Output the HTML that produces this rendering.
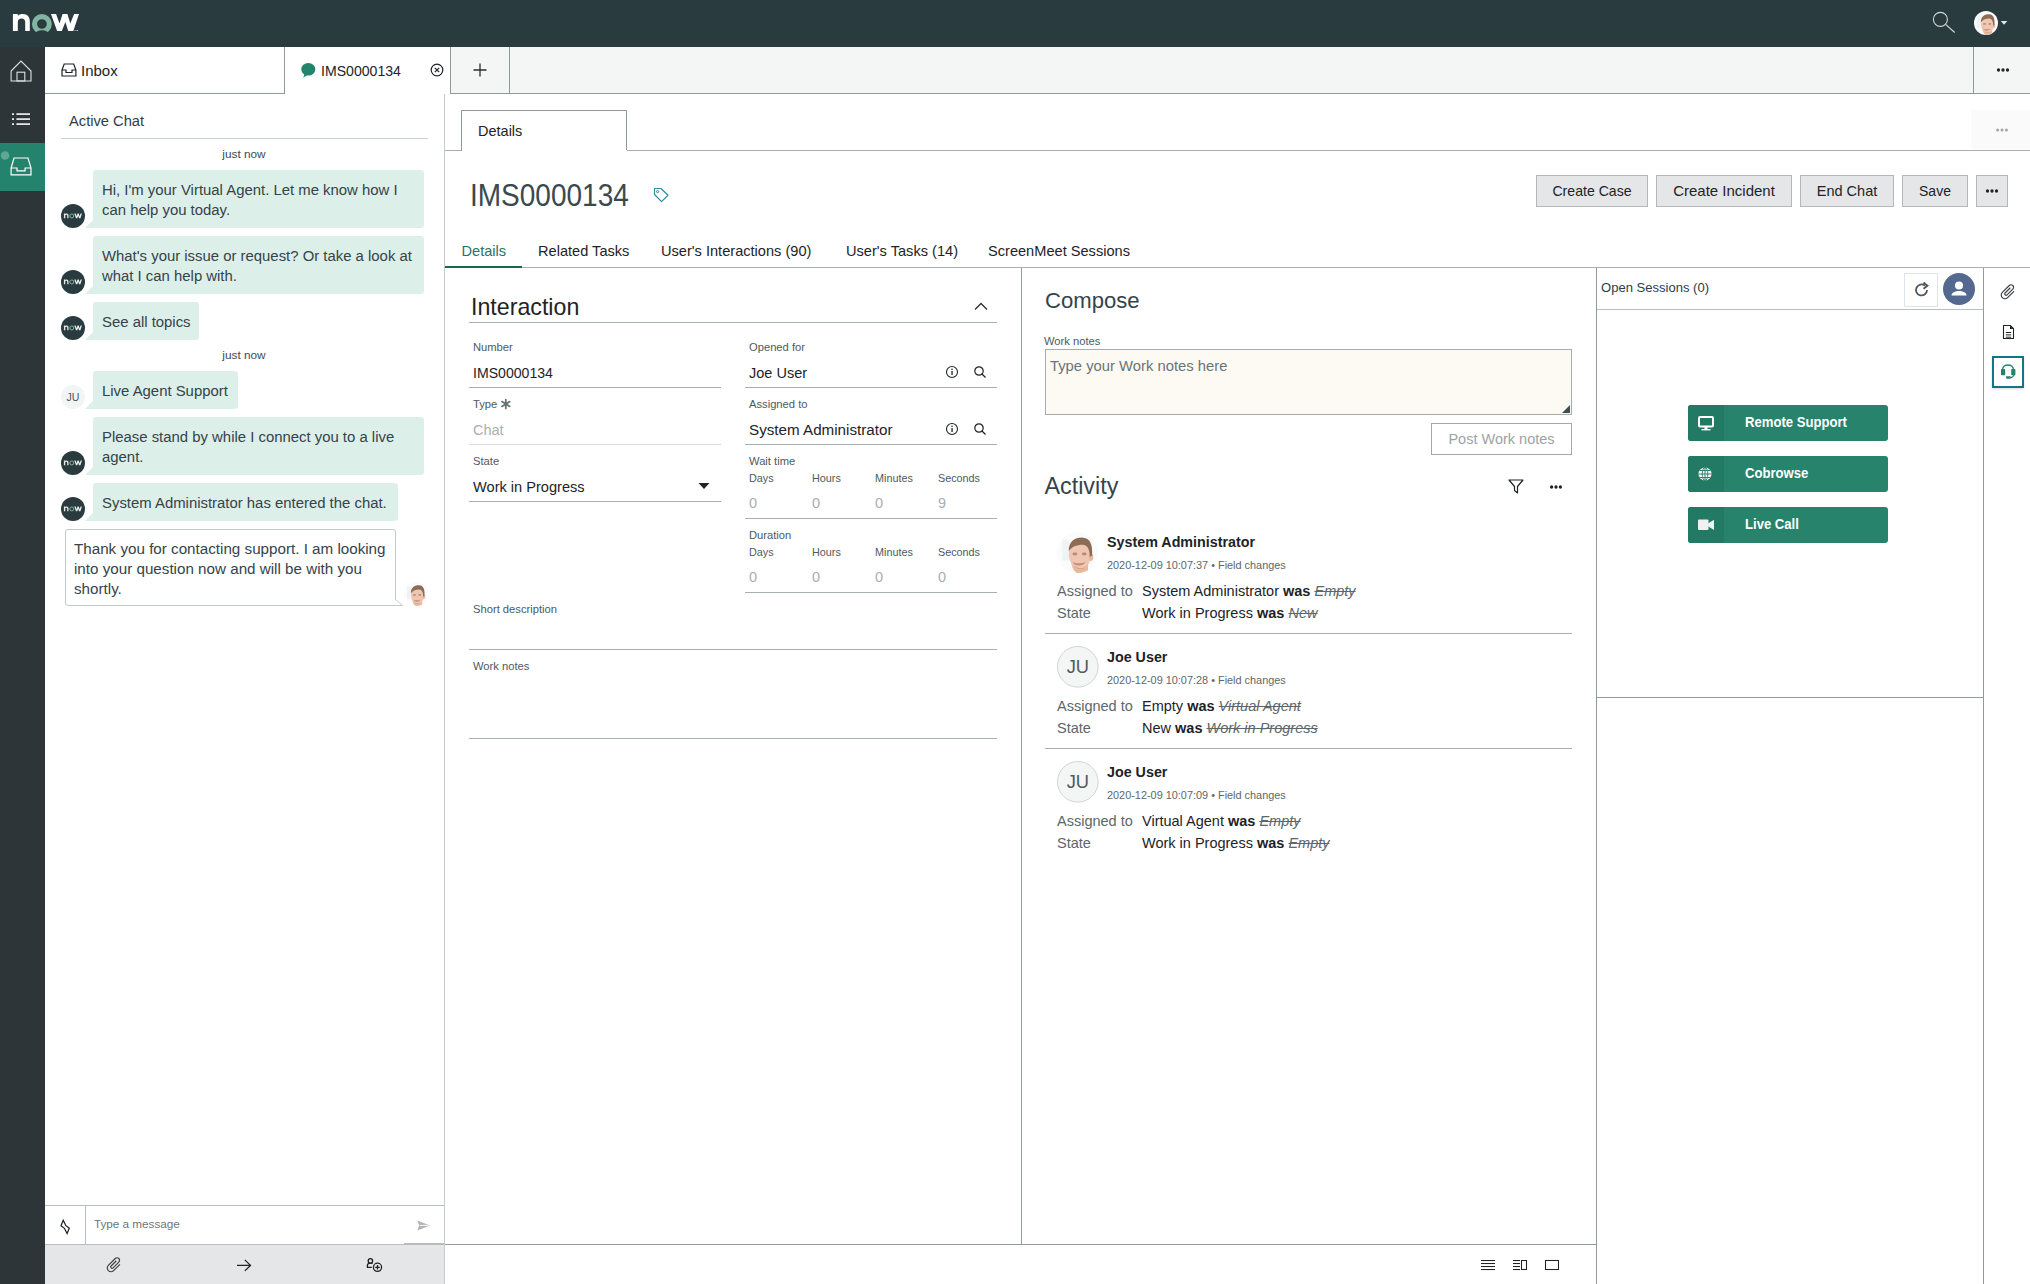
<!DOCTYPE html>
<html><head><meta charset="utf-8"><style>
html,body{margin:0;padding:0;}
body{width:2030px;height:1284px;position:relative;overflow:hidden;background:#fff;font-family:"Liberation Sans",sans-serif;}
.t{position:absolute;white-space:nowrap;}
.r{position:absolute;}
svg.r{overflow:visible}
b{font-weight:700}
</style></head><body>
<div class="r" style="left:0px;top:0px;width:2030px;height:47px;background:#2a3b40;"></div>
<svg class="r" style="left:0px;top:0px;" width="90" height="40" viewBox="0 0 90 40">
<path d="M12.9 31.1 V14 H17.8 V15.8 C19 14.6 20.8 14 22.8 14 C27.2 14 29.8 16.8 29.8 21.2 V31.1 H25.2 V22.2 C25.2 19.8 24 18.45 21.5 18.45 C19.1 18.45 17.8 20 17.8 22.5 V31.1 Z" fill="#fff"/>
<defs><clipPath id="lgc"><rect x="30" y="12" width="24" height="20"/></clipPath></defs>
<circle cx="41.9" cy="24" r="7.4" fill="none" stroke="#81b5a1" stroke-width="5.1" clip-path="url(#lgc)"/>
<ellipse cx="42" cy="34.6" rx="7" ry="4.4" fill="#2a3b40"/>
<path d="M51 14 H56.1 L59.5 23.4 L62.6 14 H67.4 L70.3 23.4 L74.1 14 H79 L73.3 31 H68.2 L65.4 21.9 L61.8 31 H57.1 Z" fill="#fff"/>
<rect x="74.5" y="30" width="1.2" height="1" fill="#9aa"/><rect x="76.5" y="30.2" width="1.5" height="0.8" fill="#dde"/>
</svg>
<svg class="r" style="left:1930px;top:9px;" width="30" height="30" viewBox="0 0 30 30"><circle cx="10.4" cy="10.4" r="7" fill="none" stroke="#d3d9d9" stroke-width="1.1"/><line x1="15.6" y1="15.3" x2="24.7" y2="23.5" stroke="#d3d9d9" stroke-width="1.1"/></svg>
<svg width="0" height="0" style="position:absolute"><defs><clipPath id="phc"><circle cx="20" cy="20" r="20"/></clipPath><symbol id="photo" viewBox="0 0 40 40"><g clip-path="url(#phc)"><rect width="40" height="40" fill="#fbfbfb"/><rect x="5" y="8" width="7" height="20" fill="#e9eef0" opacity="0.6"/><path d="M14 31 C16 38 18 41 24 41 L31 41 C30 37 30 33 30.5 30 Z" fill="#e8b89c"/><ellipse cx="22.5" cy="22.3" rx="10.8" ry="13.8" fill="#eec6b1"/><ellipse cx="33.2" cy="24.5" rx="2.2" ry="3.8" fill="#e8b89c"/><path d="M11.5 19 C11 9 18 5 25.5 5.5 C32 6 35 11.5 34.2 23 L32 24.5 C32 17 30 13 25 12.5 C19 12.5 14 14.5 11.5 19 Z" fill="#8c6c55"/><ellipse cx="17.5" cy="21.5" rx="2.4" ry="1.4" fill="#a47e6c" opacity="0.8"/><ellipse cx="26.5" cy="21.5" rx="2.4" ry="1.4" fill="#a47e6c" opacity="0.8"/><path d="M15 29 C18 34 25 34 28 29 C25 31 18 31 15 29Z" fill="#c98b78"/><path d="M17 33 C19 37 25 37 28 34 C26 36 20 36 17 33Z" fill="#b78368" opacity="0.6"/></g></symbol></defs></svg>
<svg class="r" style="left:1974px;top:11px" width="24" height="24" viewBox="0 0 40 40"><use href="#photo"/></svg>
<svg class="r" style="left:1998px;top:18px;" width="12" height="10" viewBox="0 0 12 10"><path d="M2.8 3 L9.3 3 L6 6.8Z" fill="#e3e7e8"/></svg>
<div class="r" style="left:0px;top:47px;width:45px;height:1237px;background:#2d3538;"></div>
<div class="r" style="left:0px;top:143px;width:45px;height:48px;background:#23836d;"></div>
<svg class="r" style="left:0px;top:150px;" width="12" height="12" viewBox="0 0 12 12"><circle cx="5" cy="5.5" r="4.3" fill="#5fa894"/></svg>
<svg class="r" style="left:0px;top:50px;" width="45" height="40" viewBox="0 0 45 40"><g transform="translate(0,-50)"><path d="M11.1 81 V71 L21 61.1 L31 71 V81 Z" fill="none" stroke="#dfe3e3" stroke-width="1.1" stroke-linejoin="miter"/><rect x="17" y="72.2" width="7.8" height="8.8" fill="none" stroke="#dfe3e3" stroke-width="1.1"/></g></svg>
<svg class="r" style="left:0px;top:100px;" width="45" height="40" viewBox="0 0 45 40"><g transform="translate(0,-100)" fill="#dfe3e3"><rect x="12" y="113.2" width="2" height="1.8"/><rect x="12" y="118.2" width="2" height="1.8"/><rect x="12" y="123.2" width="2" height="1.8"/><rect x="16.4" y="113.2" width="13.6" height="1.8"/><rect x="16.4" y="118.2" width="13.6" height="1.8"/><rect x="16.4" y="123.2" width="13.6" height="1.8"/></g></svg>
<svg class="r" style="left:0px;top:150px;" width="45" height="30" viewBox="0 0 45 30"><g transform="translate(0,-150)"><path d="M11.1 168 L14 158 H28 L31 168 V174.8 H11.1 Z M11.1 168 H17 V170.8 H25.1 V168 H31" fill="none" stroke="#fff" stroke-width="1.2" stroke-linejoin="miter"/></g></svg>
<div class="r" style="left:45px;top:47px;width:1985px;height:46px;background:#f4f6f5;"></div>
<div class="r" style="left:45px;top:93px;width:1985px;height:1px;background:#8f9b9b;"></div>
<div class="r" style="left:45px;top:47px;width:239px;height:46px;background:#fff;"></div>
<div class="r" style="left:284px;top:47px;width:1px;height:47px;background:#8f9b9b;"></div>
<div class="r" style="left:285px;top:47px;width:165px;height:47px;background:#fff;"></div>
<div class="r" style="left:450px;top:47px;width:1px;height:47px;background:#8f9b9b;"></div>
<div class="r" style="left:509px;top:47px;width:1px;height:47px;background:#8f9b9b;"></div>
<div class="r" style="left:1973px;top:47px;width:1px;height:47px;background:#8f9b9b;"></div>
<svg class="r" style="left:55px;top:55px;" width="30" height="30" viewBox="0 0 30 30"><g transform="translate(-55,-55)"><path d="M62 70 L64.2 64 H73.7 L75.9 70 V76 H62 Z M62 70 H66 V72.5 H72 V70 H75.9" fill="none" stroke="#1e2326" stroke-width="1.2"/></g></svg>
<div class="t " style="left:81px;top:63.30px;font-size:15px;line-height:15px;color:#1e2326;font-weight:400;">Inbox</div>
<svg class="r" style="left:299px;top:61px;" width="18" height="18" viewBox="0 0 18 18"><ellipse cx="9.3" cy="8.3" rx="7" ry="6.3" fill="#23836d"/><path d="M5.6 12.2 L4.4 16.5 L9.2 13.6Z" fill="#23836d"/></svg>
<div class="t " style="left:321px;top:64.06px;font-size:14.1px;line-height:14.1px;color:#1e2326;font-weight:400;">IMS0000134</div>
<svg class="r" style="left:429px;top:62px;" width="16" height="16" viewBox="0 0 16 16"><circle cx="8" cy="8" r="5.8" fill="none" stroke="#1e2326" stroke-width="1.2"/><path d="M5.8 5.8 L10.2 10.2 M10.2 5.8 L5.8 10.2" stroke="#1e2326" stroke-width="1.2"/></svg>
<svg class="r" style="left:472px;top:62px;" width="16" height="16" viewBox="0 0 16 16"><path d="M8 1.5 V14.5 M1.5 8 H14.5" stroke="#2b2f31" stroke-width="1.3"/></svg>
<svg class="r" style="left:1993px;top:65px" width="20" height="10"><g fill="#1e2326"><circle cx="5.5" cy="5" r="1.65"/><circle cx="10" cy="5" r="1.65"/><circle cx="14.5" cy="5" r="1.65"/></g></svg>
<div class="r" style="left:444px;top:94px;width:1px;height:1190px;background:#c6cbcb;"></div>
<div class="t " style="left:69px;top:113.56px;font-size:14.7px;line-height:14.7px;color:#2e3d49;font-weight:400;">Active Chat</div>
<div class="r" style="left:61px;top:138px;width:367px;height:1px;background:#cad0d0;"></div>
<div class="t" style="left:44.0px;width:400px;text-align:center;top:149.21px;font-size:11.8px;line-height:11.8px;color:#3e4a52;font-weight:400;">just now</div>
<div class="t" style="left:44.0px;width:400px;text-align:center;top:350.21px;font-size:11.8px;line-height:11.8px;color:#3e4a52;font-weight:400;">just now</div>
<div class="r" style="left:93px;top:170px;width:331px;height:58px;background:#ddefe9;border-radius:3px 3px 3px 0"></div>
<svg class="r" style="left:85px;top:219px;" width="9" height="9" viewBox="0 0 9 9"><path d="M0 9 L9 0 V9Z" fill="#ddefe9"/></svg>
<div class="t " style="left:102px;top:182.79px;font-size:14.9px;line-height:14.9px;color:#35434a;font-weight:400;">Hi, I'm your Virtual Agent. Let me know how I</div>
<div class="t " style="left:102px;top:202.79px;font-size:14.9px;line-height:14.9px;color:#35434a;font-weight:400;">can help you today.</div>
<svg class="r" style="left:61px;top:204px;" width="24" height="24" viewBox="0 0 24 24"><circle cx="12" cy="12" r="12" fill="#2a3b40"/><g transform="translate(2.9,9.6) scale(0.273) translate(-12.9,-14)"><path d="M12.9 31.1 V14 H17.8 V15.8 C19 14.6 20.8 14 22.8 14 C27.2 14 29.8 16.8 29.8 21.2 V31.1 H25.2 V22.2 C25.2 19.8 24 18.45 21.5 18.45 C19.1 18.45 17.8 20 17.8 22.5 V31.1 Z" fill="#e6ebea"/><circle cx="41.9" cy="22.6" r="7.3" fill="none" stroke="#81b5a1" stroke-width="3.6"/><path d="M51 14 H56.1 L59.5 23.4 L62.6 14 H67.4 L70.3 23.4 L74.1 14 H79 L73.3 31 H68.2 L65.4 21.9 L61.8 31 H57.1 Z" fill="#e6ebea"/></g></svg>
<div class="r" style="left:93px;top:236px;width:331px;height:58px;background:#ddefe9;border-radius:3px 3px 3px 0"></div>
<svg class="r" style="left:85px;top:285px;" width="9" height="9" viewBox="0 0 9 9"><path d="M0 9 L9 0 V9Z" fill="#ddefe9"/></svg>
<div class="t " style="left:102px;top:248.79px;font-size:14.9px;line-height:14.9px;color:#35434a;font-weight:400;">What's your issue or request? Or take a look at</div>
<div class="t " style="left:102px;top:268.79px;font-size:14.9px;line-height:14.9px;color:#35434a;font-weight:400;">what I can help with.</div>
<svg class="r" style="left:61px;top:270px;" width="24" height="24" viewBox="0 0 24 24"><circle cx="12" cy="12" r="12" fill="#2a3b40"/><g transform="translate(2.9,9.6) scale(0.273) translate(-12.9,-14)"><path d="M12.9 31.1 V14 H17.8 V15.8 C19 14.6 20.8 14 22.8 14 C27.2 14 29.8 16.8 29.8 21.2 V31.1 H25.2 V22.2 C25.2 19.8 24 18.45 21.5 18.45 C19.1 18.45 17.8 20 17.8 22.5 V31.1 Z" fill="#e6ebea"/><circle cx="41.9" cy="22.6" r="7.3" fill="none" stroke="#81b5a1" stroke-width="3.6"/><path d="M51 14 H56.1 L59.5 23.4 L62.6 14 H67.4 L70.3 23.4 L74.1 14 H79 L73.3 31 H68.2 L65.4 21.9 L61.8 31 H57.1 Z" fill="#e6ebea"/></g></svg>
<div class="r" style="left:93px;top:302px;width:106px;height:38px;background:#ddefe9;border-radius:3px 3px 3px 0"></div>
<svg class="r" style="left:85px;top:331px;" width="9" height="9" viewBox="0 0 9 9"><path d="M0 9 L9 0 V9Z" fill="#ddefe9"/></svg>
<div class="t " style="left:102px;top:314.79px;font-size:14.9px;line-height:14.9px;color:#35434a;font-weight:400;">See all topics</div>
<svg class="r" style="left:61px;top:316px;" width="24" height="24" viewBox="0 0 24 24"><circle cx="12" cy="12" r="12" fill="#2a3b40"/><g transform="translate(2.9,9.6) scale(0.273) translate(-12.9,-14)"><path d="M12.9 31.1 V14 H17.8 V15.8 C19 14.6 20.8 14 22.8 14 C27.2 14 29.8 16.8 29.8 21.2 V31.1 H25.2 V22.2 C25.2 19.8 24 18.45 21.5 18.45 C19.1 18.45 17.8 20 17.8 22.5 V31.1 Z" fill="#e6ebea"/><circle cx="41.9" cy="22.6" r="7.3" fill="none" stroke="#81b5a1" stroke-width="3.6"/><path d="M51 14 H56.1 L59.5 23.4 L62.6 14 H67.4 L70.3 23.4 L74.1 14 H79 L73.3 31 H68.2 L65.4 21.9 L61.8 31 H57.1 Z" fill="#e6ebea"/></g></svg>
<div class="r" style="left:93px;top:371px;width:145px;height:38px;background:#ddefe9;border-radius:3px 3px 3px 0"></div>
<svg class="r" style="left:85px;top:400px;" width="9" height="9" viewBox="0 0 9 9"><path d="M0 9 L9 0 V9Z" fill="#ddefe9"/></svg>
<div class="t " style="left:102px;top:383.79px;font-size:14.9px;line-height:14.9px;color:#35434a;font-weight:400;">Live Agent Support</div>
<svg class="r" style="left:61px;top:385px;" width="24" height="24" viewBox="0 0 24 24"><circle cx="12" cy="12" r="12" fill="#f3f5f5"/><text x="12" y="16.3" text-anchor="middle" font-family="Liberation Sans" font-size="10.5" fill="#4a5458">JU</text></svg>
<div class="r" style="left:93px;top:417px;width:331px;height:58px;background:#ddefe9;border-radius:3px 3px 3px 0"></div>
<svg class="r" style="left:85px;top:466px;" width="9" height="9" viewBox="0 0 9 9"><path d="M0 9 L9 0 V9Z" fill="#ddefe9"/></svg>
<div class="t " style="left:102px;top:429.79px;font-size:14.9px;line-height:14.9px;color:#35434a;font-weight:400;">Please stand by while I connect you to a live</div>
<div class="t " style="left:102px;top:449.79px;font-size:14.9px;line-height:14.9px;color:#35434a;font-weight:400;">agent.</div>
<svg class="r" style="left:61px;top:451px;" width="24" height="24" viewBox="0 0 24 24"><circle cx="12" cy="12" r="12" fill="#2a3b40"/><g transform="translate(2.9,9.6) scale(0.273) translate(-12.9,-14)"><path d="M12.9 31.1 V14 H17.8 V15.8 C19 14.6 20.8 14 22.8 14 C27.2 14 29.8 16.8 29.8 21.2 V31.1 H25.2 V22.2 C25.2 19.8 24 18.45 21.5 18.45 C19.1 18.45 17.8 20 17.8 22.5 V31.1 Z" fill="#e6ebea"/><circle cx="41.9" cy="22.6" r="7.3" fill="none" stroke="#81b5a1" stroke-width="3.6"/><path d="M51 14 H56.1 L59.5 23.4 L62.6 14 H67.4 L70.3 23.4 L74.1 14 H79 L73.3 31 H68.2 L65.4 21.9 L61.8 31 H57.1 Z" fill="#e6ebea"/></g></svg>
<div class="r" style="left:93px;top:483px;width:305px;height:38px;background:#ddefe9;border-radius:3px 3px 3px 0"></div>
<svg class="r" style="left:85px;top:512px;" width="9" height="9" viewBox="0 0 9 9"><path d="M0 9 L9 0 V9Z" fill="#ddefe9"/></svg>
<div class="t " style="left:102px;top:495.79px;font-size:14.9px;line-height:14.9px;color:#35434a;font-weight:400;">System Administrator has entered the chat.</div>
<svg class="r" style="left:61px;top:497px;" width="24" height="24" viewBox="0 0 24 24"><circle cx="12" cy="12" r="12" fill="#2a3b40"/><g transform="translate(2.9,9.6) scale(0.273) translate(-12.9,-14)"><path d="M12.9 31.1 V14 H17.8 V15.8 C19 14.6 20.8 14 22.8 14 C27.2 14 29.8 16.8 29.8 21.2 V31.1 H25.2 V22.2 C25.2 19.8 24 18.45 21.5 18.45 C19.1 18.45 17.8 20 17.8 22.5 V31.1 Z" fill="#e6ebea"/><circle cx="41.9" cy="22.6" r="7.3" fill="none" stroke="#81b5a1" stroke-width="3.6"/><path d="M51 14 H56.1 L59.5 23.4 L62.6 14 H67.4 L70.3 23.4 L74.1 14 H79 L73.3 31 H68.2 L65.4 21.9 L61.8 31 H57.1 Z" fill="#e6ebea"/></g></svg>
<div class="r" style="left:65px;top:529px;width:329px;height:75px;background:#fff;border:1px solid #c3c8c8;border-radius:3px 3px 0 3px"></div>
<svg class="r" style="left:394px;top:595px;" width="12" height="12" viewBox="0 0 12 12"><path d="M0 0 H1.5 V4.4 L8.5 10.5 H0 Z" fill="#fff"/><path d="M1.5 0 V4.4 L8.5 10.5 H0" fill="none" stroke="#c3c8c8" stroke-width="1"/></svg>
<div class="t " style="left:74px;top:540.63px;font-size:15.2px;line-height:15.2px;color:#35434a;font-weight:400;">Thank you for contacting support. I am looking</div>
<div class="t " style="left:74px;top:560.63px;font-size:15.2px;line-height:15.2px;color:#35434a;font-weight:400;">into your question now and will be with you</div>
<div class="t " style="left:74px;top:580.63px;font-size:15.2px;line-height:15.2px;color:#35434a;font-weight:400;">shortly.</div>
<svg class="r" style="left:404px;top:582px" width="24" height="24" viewBox="0 0 40 40"><use href="#photo"/></svg>
<div class="r" style="left:45px;top:1205px;width:399px;height:1px;background:#b5bdbd;"></div>
<div class="r" style="left:85px;top:1205px;width:1px;height:39px;background:#b5bdbd;"></div>
<svg class="r" style="left:45px;top:1205px;" width="40" height="39" viewBox="0 0 40 39"><g transform="translate(-45,-1205)"><path d="M63.2 1220.2 L65.9 1225.7 L69.3 1228.2 L67.1 1233.6 L64.4 1228.3 L61 1225.8 Z" fill="none" stroke="#1e2326" stroke-width="1.25" stroke-linejoin="miter"/></g></svg>
<div class="t " style="left:94px;top:1218.10px;font-size:11.7px;line-height:11.7px;color:#6e7679;font-weight:400;">Type a message</div>
<svg class="r" style="left:410px;top:1215px;" width="25" height="20" viewBox="0 0 25 20"><g transform="translate(-410,-1215)"><path d="M417.4 1220.4 L429.9 1225.4 L417.4 1230.6 L419.1 1225.4 Z" fill="#b3b5b5"/><path d="M419.6 1225.4 H428.5" stroke="#fff" stroke-width="0.9"/></g></svg>
<div class="r" style="left:45px;top:1244px;width:399px;height:40px;background:#e5e6e8;"></div>
<div class="r" style="left:45px;top:1244px;width:399px;height:1px;background:#b5bdbd;"></div>
<div class="r" style="left:404px;top:1243px;width:40px;height:2px;background:#b9baba;"></div>
<svg class="r" style="left:104px;top:1255px;" width="20" height="20" viewBox="0 0 20 20"><g transform="rotate(45 10 10) translate(0.25,0.64) scale(0.78)"><path d="M16.5 6v11.5c0 2.21-1.79 4-4 4s-4-1.79-4-4V5c0-1.38 1.12-2.5 2.5-2.5s2.5 1.12 2.5 2.5v10.5c0 .55-.45 1-1 1s-1-.45-1-1V6H10v9.5c0 1.38 1.12 2.5 2.5 2.5s2.5-1.12 2.5-2.5V5c0-2.21-1.79-4-4-4S7 2.79 7 5v12.5c0 3.04 2.46 5.5 5.5 5.5s5.5-2.46 5.5-5.5V6h-1.5z" fill="#3a4043"/></g></svg>
<svg class="r" style="left:220px;top:1245px;" width="180" height="39" viewBox="0 0 180 39"><g transform="translate(-220,-1245)" fill="none" stroke="#1e2326" stroke-width="1.3"><path d="M237 1265.4 H251 M244.8 1259.9 L250.5 1265.4 L244.8 1270.9"/><circle cx="370.4" cy="1260.9" r="2.2"/><path d="M372.5 1263.4 C370.5 1263 367.4 1263.2 367.4 1265 V1267.4 H371.8"/><circle cx="377.5" cy="1267.3" r="4.1"/><path d="M377.5 1265 V1269.6 M375.2 1267.3 H379.8"/></g></svg>
<div class="r" style="left:445px;top:150px;width:1585px;height:1px;background:#a9b0b3;"></div>
<div class="r" style="left:461px;top:110px;width:166px;height:41px;background:#fff;border:1px solid #8f9b9b;border-bottom:none;box-sizing:border-box"></div>
<div class="r" style="left:462px;top:150px;width:165px;height:1px;background:#fff;"></div>
<div class="t " style="left:478px;top:123.73px;font-size:14.5px;line-height:14.5px;color:#1e2326;font-weight:400;">Details</div>
<div class="r" style="left:1971px;top:110px;width:59px;height:39px;background:#fafafa;"></div>
<svg class="r" style="left:1992px;top:125px" width="20" height="10"><g fill="#a0a6a8"><circle cx="5.6" cy="5" r="1.5"/><circle cx="10" cy="5" r="1.5"/><circle cx="14.4" cy="5" r="1.5"/></g></svg>
<div class="t " style="left:470.3px;top:180.42px;font-size:31.4px;line-height:31.4px;color:#3b494f;font-weight:400;transform:scaleX(0.892);transform-origin:0 0;">IMS0000134</div>
<svg class="r" style="left:645px;top:180px;" width="30" height="30" viewBox="0 0 30 30"><path d="M9.5 8.5 H16 L23 15.3 L16.5 21.6 L9.5 14.5 Z" fill="none" stroke="#2e8a9c" stroke-width="1.2" stroke-linejoin="round"/><circle cx="12.6" cy="11.6" r="1.1" fill="none" stroke="#2e8a9c" stroke-width="1"/></svg>
<div class="r" style="left:1536px;top:175px;width:112px;height:32px;background:#e4e6e7;border:1px solid #b3b9ba;box-sizing:border-box"></div>
<div class="t" style="left:1536.0px;width:112px;text-align:center;top:184.06px;font-size:14.1px;line-height:14.1px;color:#1e2326;font-weight:400;">Create Case</div>
<div class="r" style="left:1656px;top:175px;width:136px;height:32px;background:#e4e6e7;border:1px solid #b3b9ba;box-sizing:border-box"></div>
<div class="t" style="left:1656.0px;width:136px;text-align:center;top:183.30px;font-size:15px;line-height:15px;color:#1e2326;font-weight:400;">Create Incident</div>
<div class="r" style="left:1800px;top:175px;width:94px;height:32px;background:#e4e6e7;border:1px solid #b3b9ba;box-sizing:border-box"></div>
<div class="t" style="left:1800.0px;width:94px;text-align:center;top:183.73px;font-size:14.5px;line-height:14.5px;color:#1e2326;font-weight:400;">End Chat</div>
<div class="r" style="left:1902px;top:175px;width:66px;height:32px;background:#e4e6e7;border:1px solid #b3b9ba;box-sizing:border-box"></div>
<div class="t" style="left:1902.0px;width:66px;text-align:center;top:184.15px;font-size:14px;line-height:14px;color:#1e2326;font-weight:400;">Save</div>
<div class="r" style="left:1976px;top:175px;width:32px;height:32px;background:#e4e6e7;border:1px solid #b3b9ba;box-sizing:border-box"></div>
<svg class="r" style="left:1982px;top:186px" width="20" height="10"><g fill="#1e2326"><circle cx="5.5" cy="5" r="1.65"/><circle cx="10" cy="5" r="1.65"/><circle cx="14.5" cy="5" r="1.65"/></g></svg>
<div class="r" style="left:445px;top:267px;width:1585px;height:1px;background:#a9b0b3;"></div>
<div class="t " style="left:461.5px;top:243.64px;font-size:14.6px;line-height:14.6px;color:#2a7262;font-weight:400;">Details</div>
<div class="r" style="left:445px;top:266px;width:77px;height:2px;background:#1f6452;"></div>
<div class="t " style="left:538px;top:243.64px;font-size:14.6px;line-height:14.6px;color:#1e2326;font-weight:400;">Related Tasks</div>
<div class="t " style="left:661px;top:243.64px;font-size:14.6px;line-height:14.6px;color:#1e2326;font-weight:400;">User's Interactions (90)</div>
<div class="t " style="left:846px;top:243.64px;font-size:14.6px;line-height:14.6px;color:#1e2326;font-weight:400;">User's Tasks (14)</div>
<div class="t " style="left:988px;top:243.64px;font-size:14.6px;line-height:14.6px;color:#1e2326;font-weight:400;">ScreenMeet Sessions</div>
<div class="r" style="left:1021px;top:268px;width:1px;height:976px;background:#939c9e;"></div>
<div class="t " style="left:471px;top:296.16px;font-size:23.2px;line-height:23.2px;color:#1e2326;font-weight:400;">Interaction</div>
<svg class="r" style="left:972px;top:299px;" width="18" height="14" viewBox="0 0 18 14"><path d="M3 10.5 L9 4.5 L15 10.5" fill="none" stroke="#2b2f31" stroke-width="1.3"/></svg>
<div class="r" style="left:469px;top:322px;width:528px;height:1px;background:#a9b0b3;"></div>
<div class="t " style="left:473px;top:341.52px;font-size:11.2px;line-height:11.2px;color:#4d5a60;font-weight:400;">Number</div>
<div class="t " style="left:473px;top:366.06px;font-size:14.1px;line-height:14.1px;color:#1e2326;font-weight:400;">IMS0000134</div>
<div class="r" style="left:469px;top:387px;width:252px;height:1px;background:#a9b0b3;"></div>
<div class="t " style="left:473px;top:398.52px;font-size:11.2px;line-height:11.2px;color:#4d5a60;font-weight:400;">Type</div>
<svg class="r" style="left:499px;top:398px;" width="14" height="12" viewBox="0 0 14 12"><g stroke="#687375" stroke-width="1.8" stroke-linecap="round"><path d="M6.8 1.6 V10.4 M2.9 3.6 L10.7 8.4 M10.7 3.6 L2.9 8.4"/></g></svg>
<div class="t " style="left:473px;top:422.73px;font-size:14.5px;line-height:14.5px;color:#a9aeb0;font-weight:400;">Chat</div>
<div class="r" style="left:469px;top:444px;width:252px;height:1px;background:#d7dbdb;"></div>
<div class="t " style="left:473px;top:455.52px;font-size:11.2px;line-height:11.2px;color:#4d5a60;font-weight:400;">State</div>
<div class="t " style="left:473px;top:479.64px;font-size:14.6px;line-height:14.6px;color:#1e2326;font-weight:400;">Work in Progress</div>
<svg class="r" style="left:697px;top:481px;" width="14" height="10" viewBox="0 0 14 10"><path d="M1.5 2 H12.5 L7 8Z" fill="#1e2326"/></svg>
<div class="r" style="left:469px;top:501px;width:252px;height:1px;background:#a9b0b3;"></div>
<div class="t " style="left:749px;top:341.52px;font-size:11.2px;line-height:11.2px;color:#4d5a60;font-weight:400;">Opened for</div>
<div class="t " style="left:749px;top:365.73px;font-size:14.5px;line-height:14.5px;color:#1e2326;font-weight:400;">Joe User</div>
<div class="r" style="left:745px;top:387px;width:252px;height:1px;background:#a9b0b3;"></div>
<div class="t " style="left:749px;top:398.52px;font-size:11.2px;line-height:11.2px;color:#4d5a60;font-weight:400;">Assigned to</div>
<div class="t " style="left:749px;top:422.13px;font-size:15.2px;line-height:15.2px;color:#1e2326;font-weight:400;">System Administrator</div>
<div class="r" style="left:745px;top:444px;width:252px;height:1px;background:#a9b0b3;"></div>
<svg class="r" style="left:945px;top:365px;" width="14" height="14" viewBox="0 0 14 14"><circle cx="7" cy="7" r="5.5" fill="none" stroke="#1e2326" stroke-width="1.1"/><rect x="6.4" y="6" width="1.3" height="4" fill="#1e2326"/><circle cx="7" cy="4.2" r="0.8" fill="#1e2326"/></svg>
<svg class="r" style="left:973px;top:365px;" width="14" height="14" viewBox="0 0 14 14"><circle cx="6" cy="6" r="4.2" fill="none" stroke="#1e2326" stroke-width="1.2"/><line x1="9" y1="9" x2="12.5" y2="12.5" stroke="#1e2326" stroke-width="1.3"/></svg>
<svg class="r" style="left:945px;top:422px;" width="14" height="14" viewBox="0 0 14 14"><circle cx="7" cy="7" r="5.5" fill="none" stroke="#1e2326" stroke-width="1.1"/><rect x="6.4" y="6" width="1.3" height="4" fill="#1e2326"/><circle cx="7" cy="4.2" r="0.8" fill="#1e2326"/></svg>
<svg class="r" style="left:973px;top:422px;" width="14" height="14" viewBox="0 0 14 14"><circle cx="6" cy="6" r="4.2" fill="none" stroke="#1e2326" stroke-width="1.2"/><line x1="9" y1="9" x2="12.5" y2="12.5" stroke="#1e2326" stroke-width="1.3"/></svg>
<div class="t " style="left:749px;top:455.52px;font-size:11.2px;line-height:11.2px;color:#4d5a60;font-weight:400;">Wait time</div>
<div class="t " style="left:749px;top:472.86px;font-size:10.8px;line-height:10.8px;color:#4d5a60;font-weight:400;">Days</div>
<div class="t " style="left:749px;top:496.13px;font-size:14.5px;line-height:14.5px;color:#a9aeb0;font-weight:400;">0</div>
<div class="t " style="left:812px;top:472.86px;font-size:10.8px;line-height:10.8px;color:#4d5a60;font-weight:400;">Hours</div>
<div class="t " style="left:812px;top:496.13px;font-size:14.5px;line-height:14.5px;color:#a9aeb0;font-weight:400;">0</div>
<div class="t " style="left:875px;top:472.86px;font-size:10.8px;line-height:10.8px;color:#4d5a60;font-weight:400;">Minutes</div>
<div class="t " style="left:875px;top:496.13px;font-size:14.5px;line-height:14.5px;color:#a9aeb0;font-weight:400;">0</div>
<div class="t " style="left:938px;top:472.86px;font-size:10.8px;line-height:10.8px;color:#4d5a60;font-weight:400;">Seconds</div>
<div class="t " style="left:938px;top:496.13px;font-size:14.5px;line-height:14.5px;color:#a9aeb0;font-weight:400;">9</div>
<div class="r" style="left:745px;top:518px;width:252px;height:1px;background:#a9b0b3;"></div>
<div class="t " style="left:749px;top:546.86px;font-size:10.8px;line-height:10.8px;color:#4d5a60;font-weight:400;">Days</div>
<div class="t " style="left:749px;top:569.73px;font-size:14.5px;line-height:14.5px;color:#a9aeb0;font-weight:400;">0</div>
<div class="t " style="left:812px;top:546.86px;font-size:10.8px;line-height:10.8px;color:#4d5a60;font-weight:400;">Hours</div>
<div class="t " style="left:812px;top:569.73px;font-size:14.5px;line-height:14.5px;color:#a9aeb0;font-weight:400;">0</div>
<div class="t " style="left:875px;top:546.86px;font-size:10.8px;line-height:10.8px;color:#4d5a60;font-weight:400;">Minutes</div>
<div class="t " style="left:875px;top:569.73px;font-size:14.5px;line-height:14.5px;color:#a9aeb0;font-weight:400;">0</div>
<div class="t " style="left:938px;top:546.86px;font-size:10.8px;line-height:10.8px;color:#4d5a60;font-weight:400;">Seconds</div>
<div class="t " style="left:938px;top:569.73px;font-size:14.5px;line-height:14.5px;color:#a9aeb0;font-weight:400;">0</div>
<div class="r" style="left:745px;top:592px;width:252px;height:1px;background:#a9b0b3;"></div>
<div class="t " style="left:749px;top:529.82px;font-size:11.2px;line-height:11.2px;color:#4d5a60;font-weight:400;">Duration</div>
<div class="t " style="left:473px;top:603.52px;font-size:11.2px;line-height:11.2px;color:#4d5a60;font-weight:400;">Short description</div>
<div class="r" style="left:469px;top:649px;width:528px;height:1px;background:#a9b0b3;"></div>
<div class="t " style="left:473px;top:660.52px;font-size:11.2px;line-height:11.2px;color:#4d5a60;font-weight:400;">Work notes</div>
<div class="r" style="left:469px;top:738px;width:528px;height:1px;background:#a9b0b3;"></div>
<div class="t " style="left:1045px;top:290.29px;font-size:22.1px;line-height:22.1px;color:#34444c;font-weight:400;">Compose</div>
<div class="t " style="left:1044px;top:335.52px;font-size:11.2px;line-height:11.2px;color:#4d5a60;font-weight:400;">Work notes</div>
<div class="r" style="left:1045px;top:349px;width:527px;height:66px;background:#fdfaf3;border:1px solid #a5adad;box-sizing:border-box"></div>
<svg class="r" style="left:1561px;top:404px;" width="10" height="10" viewBox="0 0 10 10"><path d="M9 1 V9 H1Z" fill="#3d4d52"/></svg>
<div class="t " style="left:1050px;top:359.47px;font-size:14.8px;line-height:14.8px;color:#6a7376;font-weight:400;">Type your Work notes here</div>
<div class="r" style="left:1431px;top:423px;width:141px;height:32px;background:#fff;border:1px solid #a3a8a8;box-sizing:border-box"></div>
<div class="t" style="left:1431.0px;width:141px;text-align:center;top:431.73px;font-size:14.5px;line-height:14.5px;color:#9da3a5;font-weight:400;">Post Work notes</div>
<div class="t " style="left:1044.5px;top:475.28px;font-size:23.3px;line-height:23.3px;color:#34444c;font-weight:400;">Activity</div>
<svg class="r" style="left:1507px;top:477px;" width="18" height="18" viewBox="0 0 18 18"><path d="M2 3 H16 L10.5 9.5 V16 L7.5 13.5 V9.5 Z" fill="none" stroke="#1e2326" stroke-width="1.2" stroke-linejoin="round"/></svg>
<svg class="r" style="left:1546px;top:482px" width="20" height="10"><g fill="#1e2326"><circle cx="5.6" cy="5" r="1.65"/><circle cx="10" cy="5" r="1.65"/><circle cx="14.4" cy="5" r="1.65"/></g></svg>
<svg class="r" style="left:1057px;top:532px" width="41" height="41" viewBox="0 0 40 40"><use href="#photo"/></svg>
<div class="t " style="left:1107px;top:534.90px;font-size:14.3px;line-height:14.3px;color:#1e2326;font-weight:700;">System Administrator</div>
<div class="t " style="left:1107px;top:559.57px;font-size:10.9px;line-height:10.9px;color:#5c676c;font-weight:400;">2020-12-09 10:07:37 &bull; Field changes</div>
<div class="t " style="left:1057px;top:584.23px;font-size:14.5px;line-height:14.5px;color:#5c676c;font-weight:400;">Assigned to</div>
<div class="t " style="left:1142px;top:584.23px;font-size:14.5px;line-height:14.5px;color:#1e2326;font-weight:400;">System Administrator <b>was</b> <i style="text-decoration:line-through;color:#5c676c">Empty</i></div>
<div class="t " style="left:1057px;top:606.03px;font-size:14.5px;line-height:14.5px;color:#5c676c;font-weight:400;">State</div>
<div class="t " style="left:1142px;top:606.03px;font-size:14.5px;line-height:14.5px;color:#1e2326;font-weight:400;">Work in Progress <b>was</b> <i style="text-decoration:line-through;color:#5c676c">New</i></div>
<div class="r" style="left:1045px;top:633px;width:527px;height:1px;background:#a9b0b3;"></div>
<svg class="r" style="left:1057px;top:646px;" width="42" height="42" viewBox="0 0 42 42"><circle cx="20.8" cy="20.8" r="20.3" fill="#f4f6f6" stroke="#cfd5d5" stroke-width="1"/><text x="20.8" y="27" text-anchor="middle" font-family="Liberation Sans" font-size="18.3" fill="#505b60">JU</text></svg>
<div class="t " style="left:1107px;top:649.90px;font-size:14.3px;line-height:14.3px;color:#1e2326;font-weight:700;">Joe User</div>
<div class="t " style="left:1107px;top:674.57px;font-size:10.9px;line-height:10.9px;color:#5c676c;font-weight:400;">2020-12-09 10:07:28 &bull; Field changes</div>
<div class="t " style="left:1057px;top:699.23px;font-size:14.5px;line-height:14.5px;color:#5c676c;font-weight:400;">Assigned to</div>
<div class="t " style="left:1142px;top:699.23px;font-size:14.5px;line-height:14.5px;color:#1e2326;font-weight:400;">Empty <b>was</b> <i style="text-decoration:line-through;color:#5c676c">Virtual Agent</i></div>
<div class="t " style="left:1057px;top:721.03px;font-size:14.5px;line-height:14.5px;color:#5c676c;font-weight:400;">State</div>
<div class="t " style="left:1142px;top:721.03px;font-size:14.5px;line-height:14.5px;color:#1e2326;font-weight:400;">New <b>was</b> <i style="text-decoration:line-through;color:#5c676c">Work in Progress</i></div>
<div class="r" style="left:1045px;top:748px;width:527px;height:1px;background:#a9b0b3;"></div>
<svg class="r" style="left:1057px;top:761px;" width="42" height="42" viewBox="0 0 42 42"><circle cx="20.8" cy="20.8" r="20.3" fill="#f4f6f6" stroke="#cfd5d5" stroke-width="1"/><text x="20.8" y="27" text-anchor="middle" font-family="Liberation Sans" font-size="18.3" fill="#505b60">JU</text></svg>
<div class="t " style="left:1107px;top:764.90px;font-size:14.3px;line-height:14.3px;color:#1e2326;font-weight:700;">Joe User</div>
<div class="t " style="left:1107px;top:789.57px;font-size:10.9px;line-height:10.9px;color:#5c676c;font-weight:400;">2020-12-09 10:07:09 &bull; Field changes</div>
<div class="t " style="left:1057px;top:814.23px;font-size:14.5px;line-height:14.5px;color:#5c676c;font-weight:400;">Assigned to</div>
<div class="t " style="left:1142px;top:814.23px;font-size:14.5px;line-height:14.5px;color:#1e2326;font-weight:400;">Virtual Agent <b>was</b> <i style="text-decoration:line-through;color:#5c676c">Empty</i></div>
<div class="t " style="left:1057px;top:836.03px;font-size:14.5px;line-height:14.5px;color:#5c676c;font-weight:400;">State</div>
<div class="t " style="left:1142px;top:836.03px;font-size:14.5px;line-height:14.5px;color:#1e2326;font-weight:400;">Work in Progress <b>was</b> <i style="text-decoration:line-through;color:#5c676c">Empty</i></div>
<div class="r" style="left:445px;top:1244px;width:1151px;height:1px;background:#8f9b9b;"></div>
<svg class="r" style="left:1470px;top:1250px;" width="100" height="30" viewBox="0 0 100 30"><g transform="translate(-1470,-1250)" fill="#1e2326"><rect x="1481" y="1260" width="14" height="1.05"/><rect x="1481" y="1263" width="14" height="1.05"/><rect x="1481" y="1266" width="14" height="1.05"/><rect x="1481" y="1269" width="14" height="1.05"/><rect x="1513" y="1260" width="7" height="1.05"/><rect x="1513" y="1263" width="7" height="1.05"/><rect x="1513" y="1266" width="7" height="1.05"/><rect x="1513" y="1269" width="7" height="1.05"/></g><g transform="translate(-1470,-1250)" fill="none" stroke="#1e2326" stroke-width="1.05"><rect x="1521.5" y="1260.5" width="5" height="9"/><rect x="1545.5" y="1260.5" width="13" height="9"/></g></svg>
<div class="r" style="left:1596px;top:268px;width:1px;height:1016px;background:#8f9b9b;"></div>
<div class="r" style="left:1983px;top:268px;width:1px;height:1016px;background:#8f9b9b;"></div>
<div class="t " style="left:1601px;top:280.95px;font-size:13.05px;line-height:13.05px;color:#2e3d49;font-weight:400;">Open Sessions (0)</div>
<div class="r" style="left:1904px;top:273px;width:34px;height:34px;background:#fff;border:1px solid #dfe4ea;box-sizing:border-box"></div>
<svg class="r" style="left:1911.5px;top:280px;" width="20" height="20" viewBox="0 0 20 20"><path d="M15 10 A5.5 5.5 0 1 1 13 5.7" fill="none" stroke="#50585c" stroke-width="1.8"/><path d="M11.5 2.5 L15.5 5.8 L11.5 8.8" fill="none" stroke="#50585c" stroke-width="1.8"/></svg>
<svg class="r" style="left:1943px;top:273px;" width="32" height="32" viewBox="0 0 32 32"><circle cx="16" cy="16" r="16" fill="#546990"/><circle cx="16" cy="12.5" r="4" fill="#fff"/><path d="M8.5 22.5 C8.5 16.5 23.5 16.5 23.5 22.5 Z" fill="#fff"/></svg>
<div class="r" style="left:1597px;top:309px;width:386px;height:1px;background:#b9c0c0;"></div>
<div class="r" style="left:1597px;top:697px;width:386px;height:1px;background:#8f9b9b;"></div>
<div class="r" style="left:1688px;top:405px;width:200px;height:36px;background:#27836c;border-radius:3px;overflow:hidden"><div style="position:absolute;left:0;top:0;width:36px;height:36px;background:#237a64"></div></div>
<svg class="r" style="left:1694px;top:413px;" width="24" height="20" viewBox="0 0 24 20"><rect x="5" y="4" width="14" height="9.5" rx="1" fill="none" stroke="#fff" stroke-width="2"/><rect x="10.5" y="13.5" width="3" height="2.5" fill="#fff"/><rect x="7.5" y="16" width="9" height="1.4" fill="#fff"/></svg>
<div class="t " style="left:1745px;top:415.39px;font-size:14.9px;line-height:14.9px;color:#fff;font-weight:700;transform:scaleX(0.88);transform-origin:0 0;">Remote Support</div>
<div class="r" style="left:1688px;top:456px;width:200px;height:36px;background:#27836c;border-radius:3px;overflow:hidden"><div style="position:absolute;left:0;top:0;width:36px;height:36px;background:#237a64"></div></div>
<svg class="r" style="left:1694px;top:464px;" width="24" height="20" viewBox="0 0 24 20"><circle cx="11" cy="10" r="6.5" fill="#fff"/><path d="M4.5 10 H17.5 M11 3.5 V16.5 M6 6.5 H16 M6 13.5 H16" stroke="#27836c" stroke-width="1"/><ellipse cx="11" cy="10" rx="2.8" ry="6.5" fill="none" stroke="#27836c" stroke-width="1"/></svg>
<div class="t " style="left:1745px;top:466.39px;font-size:14.9px;line-height:14.9px;color:#fff;font-weight:700;transform:scaleX(0.88);transform-origin:0 0;">Cobrowse</div>
<div class="r" style="left:1688px;top:507px;width:200px;height:36px;background:#27836c;border-radius:3px;overflow:hidden"><div style="position:absolute;left:0;top:0;width:36px;height:36px;background:#237a64"></div></div>
<svg class="r" style="left:1694px;top:515px;" width="24" height="20" viewBox="0 0 24 20"><rect x="4" y="4.4" width="10.5" height="10.6" rx="1" fill="#eef3f1"/><path d="M14 8.6 L20 4.8 V15 L14 11.2Z" fill="#eef3f1"/></svg>
<div class="t " style="left:1745px;top:517.39px;font-size:14.9px;line-height:14.9px;color:#fff;font-weight:700;transform:scaleX(0.88);transform-origin:0 0;">Live Call</div>
<svg class="r" style="left:1998px;top:282px;" width="20" height="20" viewBox="0 0 20 20"><g transform="rotate(45 10 10) translate(0.25,0.64) scale(0.78)"><path d="M16.5 6v11.5c0 2.21-1.79 4-4 4s-4-1.79-4-4V5c0-1.38 1.12-2.5 2.5-2.5s2.5 1.12 2.5 2.5v10.5c0 .55-.45 1-1 1s-1-.45-1-1V6H10v9.5c0 1.38 1.12 2.5 2.5 2.5s2.5-1.12 2.5-2.5V5c0-2.21-1.79-4-4-4S7 2.79 7 5v12.5c0 3.04 2.46 5.5 5.5 5.5s5.5-2.46 5.5-5.5V6h-1.5z" fill="#3a4043"/></g></svg>
<svg class="r" style="left:1995px;top:320px;" width="30" height="25" viewBox="0 0 30 25"><g transform="translate(-1995,-320)"><path d="M2003.5 325.5 H2010.3 L2013.5 328.7 V338.5 H2003.5 Z" fill="none" stroke="#1e2326" stroke-width="1.1" stroke-linejoin="round"/><path d="M2010 325.5 V329 H2013.5 Z" fill="#1e2326"/><path d="M2005.8 332.5 H2011.2 M2005.8 334.9 H2011.2 M2005.8 337.2 H2011.2" stroke="#1e2326" stroke-width="1"/></g></svg>
<div class="r" style="left:1992px;top:356px;width:32px;height:32px;background:#fff;border:2.5px solid #137487;box-sizing:border-box;box-shadow:0 1px 2px rgba(0,0,0,0.15)"></div>
<svg class="r" style="left:1992px;top:356px;" width="32" height="32" viewBox="0 0 32 32"><path d="M10.6 13.5 C10.6 7.5 21.4 7.5 21.4 13.5" fill="none" stroke="#23836d" stroke-width="1.4"/><rect x="9" y="13" width="4.2" height="6.2" rx="0.8" fill="#23836d"/><rect x="19.2" y="13" width="4.2" height="6.2" rx="0.8" fill="#23836d"/><path d="M21.8 19 C21.5 21 20 21.6 18 21.6" fill="none" stroke="#23836d" stroke-width="1.2"/><rect x="14" y="20.2" width="4.8" height="2.6" rx="0.8" fill="#23836d"/></svg>
</body></html>
